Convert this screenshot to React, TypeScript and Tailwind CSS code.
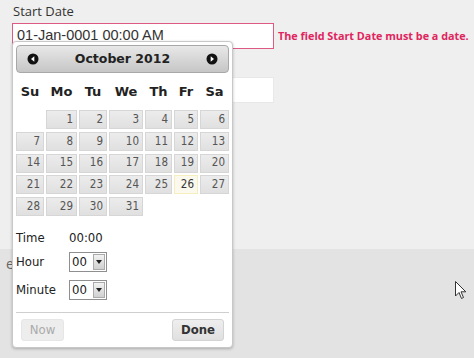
import React from "react";

const days = ["Su", "Mo", "Tu", "We", "Th", "Fr", "Sa"];

function Cell({ d }: { d: number | null }) {
  if (d === null) return <div className="h-[19px]" />;
  const hl = d === 26;
  return (
    <div
      className={
        "h-[19px] flex items-center justify-end pr-[3px] border text-[11.5px] " +
        (hl
          ? "bg-[#fbf9ee] border-[#f5eebf] text-[#363636]"
          : "bg-gradient-to-b from-[#ececec] to-[#e0e0e0] border-[#d6d6d6] text-[#555]")
      }
    >
      {d}
    </div>
  );
}

function Select() {
  return (
    <div className="flex w-[38px] h-[20px] border border-[#8f8f8f] bg-white">
      <div className="flex-1 flex items-center pl-[2px] text-[13px] text-[#222]">00</div>
      <div className="w-[12px] m-[1px] bg-gradient-to-b from-[#f2f2f2] to-[#d0d0d0] border border-[#aaa] flex items-center justify-center">
        <svg width="6" height="4" viewBox="0 0 6 4">
          <path d="M0 0 L6 0 L3 4 Z" fill="#222" />
        </svg>
      </div>
    </div>
  );
}

export default function App() {
  const cells: (number | null)[] = [null];
  for (let i = 1; i <= 31; i++) cells.push(i);
  const sans = { fontFamily: '"Open Sans", "Noto Sans", sans-serif' };
  const cal = { fontFamily: '"DejaVu Sans Condensed", "DejaVu Sans", sans-serif' };
  return (
    <div className="relative w-[474px] h-[358px] overflow-hidden text-[#333]" style={sans}>
      <div className="h-[249px] bg-[#efefef] pl-[12px] pt-[2px]">
        <div className="text-[13px] leading-[18px] pl-[1px] text-[#333]">Start Date</div>
        <div className="mt-[3px] flex items-center">
          <div
            className="shrink-0 w-[262px] h-[26px] border border-[#dd5a82] bg-white pl-[4px] flex items-center text-[14.5px] text-[#333]"
            style={{ fontFamily: '"Liberation Sans", Arial, sans-serif' }}
          >
            01-Jan-0001 00:00 AM
          </div>
          <div className="ml-[4px] text-[10.8px] font-bold text-[#e0245e] whitespace-nowrap">
            The field Start Date must be a date.
          </div>
        </div>
        <div className="mt-[28px] w-[262px] h-[26px] border border-[#e8e8e8] bg-white" />
      </div>
      <div className="h-[109px] bg-[#e3e3e3] pl-[6px] pt-[4px] text-[14px] text-[#666]">e</div>

      <div
        className="absolute left-[12px] top-[41px] w-[221px] h-[307px] bg-white border border-[#c8c8c8] rounded-[4px] shadow-[0_1px_3px_rgba(0,0,0,0.25)] p-[3px]"
        style={cal}
      >
        <div className="h-[28px] rounded-[4px] border border-[#a8a8a8] bg-gradient-to-b from-[#e8e8e8] to-[#c6c6c6] flex items-center justify-between px-[10px]">
          <svg width="12" height="12" viewBox="0 0 12 12">
            <circle cx="6" cy="6" r="5.5" fill="#111" />
            <path d="M7.3 3.2 L4 6 L7.3 8.8 Z" fill="#fff" />
          </svg>
          <div className="text-[12.5px] font-bold text-[#222]" style={{ fontFamily: '"DejaVu Sans", sans-serif' }}>
            October 2012
          </div>
          <svg width="12" height="12" viewBox="0 0 12 12">
            <circle cx="6" cy="6" r="5.5" fill="#111" />
            <path d="M4.7 3.2 L8 6 L4.7 8.8 Z" fill="#fff" />
          </svg>
        </div>
        <div className="pt-[8px]">
          <div className="grid grid-cols-[28px_31px_28px_34px_27px_24px_29px] gap-x-[2px] gap-y-[2.75px]">
            {days.map((d) => (
              <div
                key={d}
                className="h-[22px] mb-[4.25px] flex items-center justify-center text-[13px] font-bold text-[#222]"
                style={{ fontFamily: '"DejaVu Sans", sans-serif' }}
              >
                {d}
              </div>
            ))}
            {cells.map((d, i) => (
              <Cell key={i} d={d} />
            ))}
          </div>
        </div>
        <div className="mt-[12px] text-[13px] text-[#222]">
          <div className="flex items-center h-[20px]">
            <div className="w-[53px]">Time</div>
            <div>00:00</div>
          </div>
          <div className="flex items-center h-[20px] mt-[4px]">
            <div className="w-[53px]">Hour</div>
            <Select />
          </div>
          <div className="flex items-center h-[20px] mt-[8px]">
            <div className="w-[53px]">Minute</div>
            <Select />
          </div>
        </div>
        <div className="mt-[12px] border-t border-[#cfcfcf] pt-[6px] flex justify-between px-[5px]">
          <div className="w-[43px] h-[22px] rounded-[3px] border border-[#e6e6e6] bg-[#ededed] flex items-center justify-center text-[13px] text-[#aaa]">
            Now
          </div>
          <div className="w-[52px] h-[22px] rounded-[3px] border border-[#d3d3d3] bg-gradient-to-b from-[#eeeeee] to-[#e0e0e0] flex items-center justify-center text-[13px] font-bold text-[#333]">
            Done
          </div>
        </div>
      </div>

      <svg className="absolute left-[455px] top-[281px]" width="12" height="19" viewBox="0 0 12 19">
        <path d="M0.5 0.5 L0.5 15 L4 11.5 L6.5 17.5 L8.5 16.5 L6 10.8 L10.8 10.8 Z" fill="#fff" stroke="#333" strokeWidth="1" strokeLinejoin="round" />
      </svg>
    </div>
  );
}
